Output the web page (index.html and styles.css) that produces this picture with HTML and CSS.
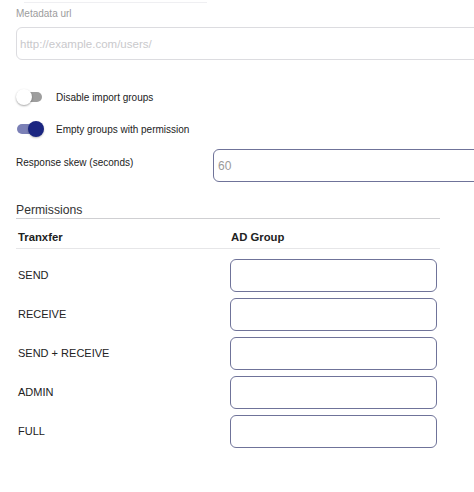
FILE: index.html
```html
<!DOCTYPE html>
<html>
<head>
<meta charset="utf-8">
<link rel="stylesheet" href="styles.css">
</head>
<body>
<div class="page">
  <div class="topline"></div>
  <div class="field-label">Metadata url</div>
  <div class="text-input disabled"><span class="placeholder">http://example.com/users/</span></div>

  <div class="toggle-row first">
    <div class="toggle off"><span class="track"></span><span class="knob"></span></div>
    <span class="toggle-label">Disable import groups</span>
  </div>
  <div class="toggle-row">
    <div class="toggle on"><span class="track"></span><span class="knob"></span></div>
    <span class="toggle-label">Empty groups with permission</span>
  </div>

  <div class="skew-row">
    <span class="skew-label">Response skew (seconds)</span>
    <div class="text-input skew"><span class="value">60</span></div>
  </div>

  <h2 class="section-title">Permissions</h2>
  <div class="perm-table">
    <div class="perm-head">
      <span class="th first-col">Tranxfer</span>
      <span class="th">AD Group</span>
    </div>
    <div class="perm-row">
      <span class="td">SEND</span>
      <div class="group-input"></div>
    </div>
    <div class="perm-row">
      <span class="td">RECEIVE</span>
      <div class="group-input"></div>
    </div>
    <div class="perm-row">
      <span class="td">SEND + RECEIVE</span>
      <div class="group-input"></div>
    </div>
    <div class="perm-row">
      <span class="td">ADMIN</span>
      <div class="group-input"></div>
    </div>
    <div class="perm-row">
      <span class="td">FULL</span>
      <div class="group-input"></div>
    </div>
  </div>
</div>
</body>
</html>
```

FILE: styles.css
```css
* { box-sizing: border-box; }
html, body {
  margin: 0;
  padding: 0;
  background: #ffffff;
  overflow: hidden;
}
body {
  font-family: "Liberation Sans", Arial, sans-serif;
  color: #222222;
}
.page {
  width: 474px;
  height: 492px;
  padding-left: 16px;
  overflow: hidden;
}
.topline {
  height: 1px;
  width: 183px;
  margin: 2px 0 0 8px;
  background: #efeff2;
}
.field-label {
  font-size: 10px;
  line-height: 13px;
  margin-top: 4px;
  color: #9c9c9c;
}
.text-input {
  height: 33px;
  border-radius: 6px;
  display: flex;
  align-items: center;
  font-size: 12px;
}
.text-input.disabled {
  margin-top: 7px;
  width: 480px;
  border: 1px solid #dcdce0;
  padding-left: 3px;
  font-size: 11.5px;
}
.placeholder { color: #c9c9cc; }

.toggle-row {
  display: flex;
  align-items: center;
  gap: 13px;
  height: 20px;
  margin-top: 12px;
}
.toggle-row.first { margin-top: 27px; }
.toggle {
  position: relative;
  width: 27px;
  height: 16px;
  flex: none;
}
.track {
  position: absolute;
  left: 1px;
  top: 3px;
  width: 25px;
  height: 10px;
  border-radius: 5px;
}
.knob {
  position: absolute;
  top: 0;
  width: 16px;
  height: 16px;
  border-radius: 50%;
}
.toggle.off .track { background: #9e9e9e; }
.toggle.off .knob {
  left: 0;
  background: #ffffff;
  box-shadow: 0 1px 2px rgba(0,0,0,0.35);
}
.toggle.on .track { background: #7b80b6; }
.toggle.on .knob {
  left: 12px;
  background: #1a2580;
  box-shadow: 0 1px 2px rgba(0,0,0,0.25);
}
.toggle-label {
  font-size: 10px;
  line-height: 13px;
  color: #222;
}

.skew-row {
  display: flex;
  align-items: flex-start;
  margin-top: 10px;
}
.skew-label {
  width: 197px;
  flex: none;
  font-size: 10px;
  line-height: 13px;
  margin-top: 7px;
}
.text-input.skew {
  width: 300px;
  flex: none;
  border: 1px solid #6f7399;
  padding-left: 4px;
}
.value { color: #9a9a9a; }

.section-title {
  margin: 20px 0 0 0;
  width: 424px;
  font-size: 12.2px;
  font-weight: normal;
  line-height: 16px;
  color: #333;
  border-bottom: 1px solid #cfcfd2;
}
.perm-table { width: 424px; }
.perm-head {
  display: grid;
  grid-template-columns: 214px 1fr;
  padding: 11px 0 4px 0;
  border-bottom: 1px solid #e6e6e8;
  margin-top: 0;
}
.th {
  font-size: 11.3px;
  line-height: 14px;
  font-weight: bold;
  color: #222;
  padding-left: 1px;
}
.th.first-col { padding-left: 2px; }
.perm-row {
  display: grid;
  grid-template-columns: 214px 207px;
  align-items: center;
  margin-top: 6px;
}
.perm-head + .perm-row { margin-top: 10px; }
.td {
  font-size: 11px;
  line-height: 13px;
  padding-left: 2px;
  color: #222;
}
.group-input {
  height: 33px;
  border: 1px solid #6f7399;
  border-radius: 6px;
}
```
